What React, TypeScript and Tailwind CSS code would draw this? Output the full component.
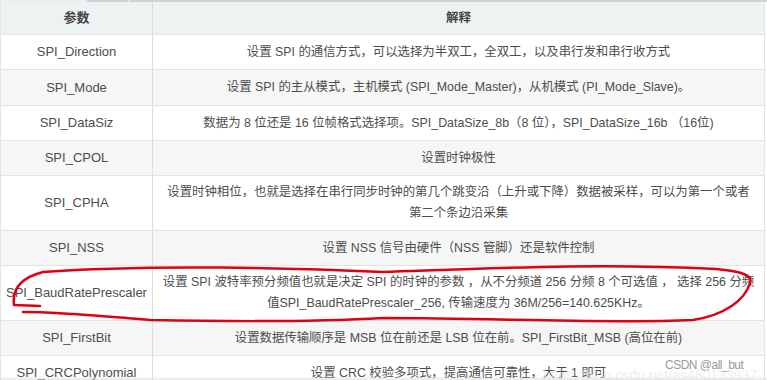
const rows: { name: string; desc: React.ReactNode; h: string }[] = [
  { name: "SPI_Direction", desc: "设置 SPI 的通信方式，可以选择为半双工，全双工，以及串行发和串行收方式", h: "h-[35px]" },
  { name: "SPI_Mode", desc: "设置 SPI 的主从模式，主机模式 (SPI_Mode_Master)，从机模式 (PI_Mode_Slave)。", h: "h-[36px]" },
  { name: "SPI_DataSiz", desc: "数据为 8 位还是 16 位帧格式选择项。SPI_DataSize_8b（8 位），SPI_DataSize_16b （16位)", h: "h-[35px]" },
  { name: "SPI_CPOL", desc: "设置时钟极性", h: "h-[35px]" },
  {
    name: "SPI_CPHA",
    desc: (
      <>
        设置时钟相位，也就是选择在串行同步时钟的第几个跳变沿（上升或下降）数据被采样，可以为第一个或者
        <br />
        第二个条边沿采集
      </>
    ),
    h: "h-[55px]",
  },
  { name: "SPI_NSS", desc: "设置 NSS 信号由硬件（NSS 管脚）还是软件控制", h: "h-[35px]" },
  {
    name: "SPI_BaudRatePrescaler",
    desc: (
      <>
        设置 SPI 波特率预分频值也就是决定 SPI 的时钟的参数 ，从不分频道 256 分频 8 个可选值 ， 选择 256 分频
        <br />
        值SPI_BaudRatePrescaler_256, 传输速度为 36M/256=140.625KHz。
      </>
    ),
    h: "h-[55px]",
  },
  { name: "SPI_FirstBit", desc: "设置数据传输顺序是 MSB 位在前还是 LSB 位在前。SPI_FirstBit_MSB (高位在前)", h: "h-[35px]" },
  { name: "SPI_CRCPolynomial", desc: "设置 CRC 校验多项式，提高通信可靠性，大于 1 即可", h: "h-[35px]" },
];

export default function App() {
  return (
    <div
      className="relative w-[767px] h-[380px] overflow-hidden bg-white text-[13px] text-[#4d4d4d]"
      style={{ fontFamily: '"Liberation Sans", Arial, "Noto Sans CJK SC", sans-serif' }}
    >
      {/* top strip */}
      <div className="flex h-[2px]">
        <div className="w-[87px] bg-[#eeeeee]" />
        <div className="w-[41px] bg-[#d2d2d2]" />
        <div className="w-px bg-[#eeeeee]" />
        <div className="flex-1 bg-[#d2d2d2]" />
      </div>

      <div className="w-[765px] border-l border-r border-[#e4e4e4]">
        {/* header */}
        <div className="grid grid-cols-[152px_1fr] h-[33px] bg-[#edf2f2] border-b border-[#dfe3e3] font-bold text-[#444]">
          <div className="flex items-center justify-center border-r border-[#dcdcdc]">参数</div>
          <div className="flex items-center justify-center text-[12.5px]">解释</div>
        </div>

        {rows.map((r, i) => (
          <div
            key={r.name}
            className={`grid grid-cols-[152px_1fr] border-b border-[#e3e3e3] ${r.h} ${i % 2 === 1 ? "bg-[#f6f6f6]" : "bg-white"}`}
          >
            <div className="flex items-center justify-center border-r border-[#dcdcdc] whitespace-nowrap">
              {r.name}
            </div>
            <div className="flex items-center justify-center text-center whitespace-nowrap text-[12.4px] leading-[21px]">
              <span>{r.desc}</span>
            </div>
          </div>
        ))}
      </div>

      {/* red hand-drawn mark */}
      <svg className="absolute left-0 top-0 pointer-events-none" width="767" height="380">
        <path
          d="M 40 306 L 14 305 C 12 290 20 278 43 272 C 150 264 300 268 383 272 C 500 268 600 263 716 269 C 740 271 753 275 750 283 C 745 300 725 315 693 320 C 600 324 500 318 383 318 C 300 323 200 321 150 320 C 100 316 60 312 23 312"
          fill="none"
          stroke="#e0000f"
          strokeWidth="2.5"
          strokeLinecap="round"
          strokeLinejoin="round"
        />
      </svg>

      {/* watermarks */}
      <div className="absolute left-[665px] top-[359px] text-[12px] tracking-[-0.5px] text-[#9a9a9a] leading-none">
        CSDN @all_but
      </div>
      <div className="absolute right-[10px] top-[368px] text-[14px] text-[#e8e8e8]/70 leading-none whitespace-nowrap">
        https://blog.csdn.net/as480133937
      </div>
      <div className="absolute left-0 bottom-0 w-full h-[4px] bg-gradient-to-b from-transparent to-[#d8d8d8]/60" />
    </div>
  );
}
